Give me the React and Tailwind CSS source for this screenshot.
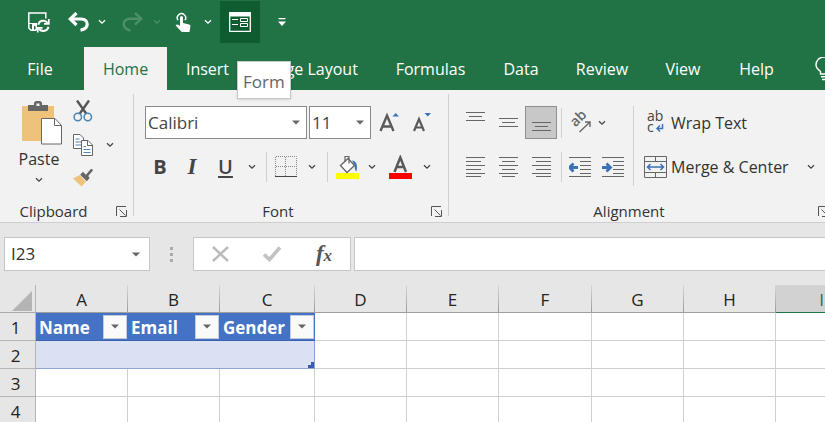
import React from "react";

const Chevron = ({ className = "text-[#444]" }) => (
  <svg width="8" height="6" viewBox="0 0 8 6" className={"shrink-0 " + className} fill="none" stroke="currentColor" strokeWidth="1.3">
    <path d="M1 1.2 4 4.2 7 1.2" />
  </svg>
);

const DownTriangle = ({ className = "text-[#666]" }) => (
  <svg width="8" height="5" viewBox="0 0 8 5" className={"shrink-0 " + className}>
    <path d="M0 .5h8L4 4.5z" fill="currentColor" />
  </svg>
);

const SaveIcon = () => (
  <svg width="22" height="21" viewBox="0 0 22 21" fill="none" stroke="#fff">
    <path d="M8 18.2H3L.8 16V1h17v5.500" strokeWidth="1.5" />
    <path d="M1 11.500h8" />
    <path d="M4 12h5v6.500H7.500V14H6v4.500H4z" fill="#fff" stroke="none" />
    <path d="M10.200 12.800a5.300 5.300 0 0 1 9.400-2M20.500 14.800a5.300 5.300 0 0 1-9.400 2" strokeWidth="2" />
    <path d="M20.800 7v4.800H16M9.800 20.600v-4.800h4.800" strokeWidth="1.700" />
  </svg>
);

const UndoIcon = () => (
  <svg width="21" height="20" viewBox="0 0 21 20" fill="none" stroke="currentColor" strokeWidth="3.2">
    <path d="M8.500 1 2.300 7l6.200 6" />
    <path d="M3 7h10c4 0 6.200 2.200 6.200 5.200 0 3-2.500 5-6.700 6" />
  </svg>
);

const RedoIcon = () => (
  <svg width="21" height="20" viewBox="0 0 21 20" fill="none" stroke="currentColor" strokeWidth="2.4">
    <path d="m13 1 6.2 5.8-6.2 5.8" />
    <path d="M18.5 6.8H8c-4 0-6.3 2.2-6.3 5.2 0 3.2 2.5 5.5 6.8 6.6" />
  </svg>
);

const TouchIcon = () => (
  <svg width="16" height="21" viewBox="0 0 16 21">
    <path d="M3 8.2a4.2 4.2 0 1 1 7 0" fill="none" stroke="#fff" strokeWidth="1.5" />
    <path d="M5 5.5a1.5 1.5 0 0 1 3 0V11l6 1.6c1.2.4 1.6 1.1 1.4 2.2L14.5 20H6.8L.6 13.4c.8-1.2 2-1.2 3-.4L5 14z" fill="#fff" />
  </svg>
);

const FormIcon = () => (
  <svg width="22" height="20" viewBox="0 0 22 20" fill="none" stroke="#fff">
    <path d="M.7.7h20.6v18.6H.7z" strokeWidth="1.3" />
    <path d="M1 1h20v3.5H1z" fill="#fff" stroke="none" />
    <path d="M3 7.5h6M3 12.5h6M11.500 6.5h7v3h-7zM11.500 11.5h7v3h-7z" />
  </svg>
);

const BulbIcon = () => (
  <svg width="18" height="24" viewBox="0 0 18 24" fill="none" stroke="#fff" strokeWidth="1.4">
    <path d="M5.5 17v-2.5C3 12.6 1 10.800 1 8a8 8 0 0 1 16 0c0 2.800-2 4.600-4.500 6.500V17zM6 19.800h6M7 22.500h4" />
  </svg>
);

const PasteIcon = () => (
  <svg width="41" height="44" viewBox="0 0 41 44">
    <path d="M0 5h32v35H0z" fill="#eec27a" />
    <path d="M6 4h6V2.500C12 1 13 0 14.500 0h3C19 0 20 1 20 2.500V4h6v6H6z" fill="#666" />
    <path d="M14.500 2.500h3V5h-3z" fill="#f2f2f2" />
    <path d="M19.500 17.500H33l6.500 7V43h-20z" fill="#fff" stroke="#666" />
    <path d="M32.500 17.500v7h7" fill="none" stroke="#666" />
  </svg>
);

const CutIcon = () => (
  <svg width="20" height="22" viewBox="0 0 20 22" fill="none">
    <path d="M4 .5 13.500 14M16 .5 6.500 14" stroke="#555" strokeWidth="2.400" />
    <circle cx="4.800" cy="17" r="3.700" stroke="#4a86b8" strokeWidth="1.500" />
    <circle cx="14.800" cy="17" r="3.700" stroke="#4a86b8" strokeWidth="1.500" />
  </svg>
);

const CopyIcon = () => (
  <svg width="20" height="22" viewBox="0 0 20 22" fill="#fff" stroke="#666">
    <path d="M.5.5H7L10.500 4v10.500H.5z" />
    <path d="M2.500 5h4M2.500 8h6M2.500 11h6" stroke="#4a86b8" />
    <path d="M8.500 6.500H15L19.500 11v10.500h-11z" />
    <path d="M14.500 6.500v5h5" fill="none" />
    <path d="M10.500 12.500h2.500M10.500 15.500h7M10.500 18.500h7" stroke="#4a86b8" />
  </svg>
);

const BrushIcon = () => (
  <svg width="21" height="19" viewBox="0 0 21 19">
    <path d="M0 10.500 7 7l6.500 7L9 19z" fill="#eec27a" />
    <path d="m7.500 6.500 3-3 3 3L18.500.8c1.500-.8 2.800.5 2 2L16 8l1.500 2-3 3.500z" fill="#666" />
  </svg>
);

const Launcher = () => (
  <svg width="11" height="11" viewBox="0 0 11 11" fill="none" stroke="#555">
    <path d="M.5 10V.5H10M3.500 3.500l6 6M10.500 4v6.500H4" />
  </svg>
);

const BordersIcon = () => (
  <svg width="22" height="22" viewBox="0 0 22 22" fill="none" stroke="#888">
    <path d="M.5 20V.5h21V20M10.500 1v19M1 10.500h20" strokeDasharray="1 1" />
    <path d="M0 20.500h22" stroke="#444" />
  </svg>
);

const FillIcon = () => (
  <svg width="23" height="24" viewBox="0 0 23 24" fill="none">
    <path d="M0 18h23v6H0z" fill="#ff0" />
    <path d="M4.500 10.500 12 3.500l6.500 7L11 17.500z" fill="#fff" stroke="#666" strokeWidth="1.300" />
    <path d="M9 7V1.500h4V8.500" stroke="#666" strokeWidth="1.200" />
    <path d="M16 5.500c4 .5 6 4 4.500 11-1.500-1-2-3-1.700-6z" fill="#3a72b5" />
  </svg>
);

const FontColorIcon = () => (
  <svg width="23" height="24" viewBox="0 0 23 24" fill="none">
    <path d="M0 18h23v6H0z" fill="#f00" />
    <path d="M5.500 17 11.300 2.500 17 17M7.500 12h7.500" stroke="#5a5a5a" strokeWidth="2.500" />
  </svg>
);

const GrowIcon = ({ down }) => (
  <svg width="22" height="22" viewBox="0 0 22 22" fill="none">
    {down ? (
      <>
        <path d="M3 19 8 7 13 19M5 15.500h6" stroke="#5a5a5a" strokeWidth="2.200" />
        <path d="M13.500 1h6.500l-3.200 3.500z" fill="#3a72b5" />
      </>
    ) : (
      <>
        <path d="M1.500 19 8 3.500 14.500 19M4 14.500h8" stroke="#5a5a5a" strokeWidth="2.400" />
        <path d="M13.500 4.500h6.500L16.700 1z" fill="#3a72b5" />
      </>
    )}
  </svg>
);

const LINES = {
  top: "M0 .5h19M3 4.500h13M0 8.500h19",
  left: "M0 .5h19M0 4.500h15M0 8.500h19M0 12.500h15M0 16.500h19M0 19.500h15",
  center: "M0 .5h19M3 4.500h13M0 8.500h19M3 12.500h13M0 16.500h19M3 19.500h13",
  right: "M0 .5h19M4 4.500h15M0 8.500h19M4 12.500h15M0 16.500h19M4 19.500h15",
};

const LinesIcon = ({ kind }) => (
  <svg width="19" height={kind === "top" ? 9 : 20} fill="none" stroke="#666">
    <path d={LINES[kind]} />
  </svg>
);

const IndentIcon = ({ right }) => (
  <svg width="22" height="20" viewBox="0 0 22 20" fill="none" stroke="#666">
    <path d="M0 .5h22M11 4.500h11M11 8.500h11M11 12.500h11M11 16.500h11M0 19.500h22" />
    <path d={right ? "M0 10.500h8M4.500 6.500l4 4-4 4" : "M9 10.500H1M4.500 6.500l-4 4 4 4"} stroke="#3a72b5" strokeWidth="2.800" />
  </svg>
);

const OrientationIcon = () => (
  <svg width="20" height="20" viewBox="0 0 20 20" fill="none" stroke="#666" strokeWidth="1.400" className="overflow-visible">
    <text transform="translate(4.500 14.500) rotate(-45)" fontSize="14" fontWeight="600" fill="#666" stroke="none">ab</text>
    <path d="M8.500 19 18.500 9.500M14 9h5v5" />
  </svg>
);

const WrapIcon = () => (
  <svg width="17" height="22" viewBox="0 0 17 22" fill="none" className="overflow-visible">
    <text fontSize="14" fill="#444">
      <tspan x="0" y="9">ab</tspan>
      <tspan x="0" y="20">c</tspan>
    </text>
    <path d="M15.500 12v4.500H10M13 13.500l-3 3 3 3" stroke="#3a72b5" strokeWidth="1.500" />
  </svg>
);

const MergeIcon = () => (
  <svg width="23" height="22" viewBox="0 0 23 22" fill="none" stroke="#666">
    <path d="M.5.500h22v21H.5zM.5 5.500h22M.5 16.500h22M11.500.500v5M11.500 16.500v5" />
    <path d="M3.500 11h16M6.500 8l-3 3 3 3M16.500 8l3 3-3 3" stroke="#3a72b5" strokeWidth="1.500" />
  </svg>
);

const IconButton = ({ label, className = "", children }) => (
  <button type="button" aria-label={label} className={"flex shrink-0 items-center justify-center " + className}>
    {children}
  </button>
);

const Rule = () => <div className="h-[30px] w-px shrink-0 bg-[#cfcfcf]" />;

const Group = ({ title, className, children }) => (
  <section aria-label={title} className={"flex shrink-0 flex-col " + className}>
    <div className="h-[110px]">{children}</div>
    <div className="flex h-[22px] items-center">
      <span className="flex-1 text-center text-[15px] leading-5">{title}</span>
      <IconButton label={title + " settings"} className="w-[26px] pl-0.5">
        <Launcher />
      </IconButton>
    </div>
  </section>
);

const GroupRule = () => <div className="mt-1 h-[122px] w-px shrink-0 bg-[#cfcfcf]" />;

const TABS = [
  ["File", "w-[84px] pr-1"],
  ["Home", "w-[83px] bg-[#f2f2f2] text-[#217346]"],
  ["Insert", "w-[81px]"],
  ["Page Layout", "w-[129px]"],
  ["Formulas", "w-[107px]"],
  ["Data", "w-[74px]"],
  ["Review", "w-[88px]"],
  ["View", "w-[74px]"],
  ["Help", "w-[73px]"],
];

function TitleBar() {
  return (
    <header className="bg-[#217346] text-white">
      <div className="flex h-[47px] items-start pl-7">
        <div className="flex h-11 items-center">
          <IconButton label="Save"><SaveIcon /></IconButton>
          <IconButton label="Undo" className="ml-[18px]"><UndoIcon /></IconButton>
          <IconButton label="Undo history" className="ml-[9px]"><Chevron className="text-white" /></IconButton>
          <IconButton label="Redo" className="ml-4 text-[#4c9069]"><RedoIcon /></IconButton>
          <IconButton label="Redo history" className="ml-[10px]"><Chevron className="text-[#4c9069]" /></IconButton>
          <IconButton label="Touch mode" className="ml-[14px]"><TouchIcon /></IconButton>
          <IconButton label="Touch mode options" className="ml-[13px]"><Chevron className="text-white" /></IconButton>
          <div className="relative ml-2">
            <IconButton label="Form" className="h-[42px] w-10 bg-[#0e5c2f]"><FormIcon /></IconButton>
            <div role="tooltip" className="absolute left-[17px] top-[60px] z-10 border border-[#c8c8c8] bg-white px-[5px] pb-1 pt-2 text-[17px] leading-6 text-[#666] shadow">
              Form
            </div>
          </div>
          <IconButton label="Customize toolbar" className="ml-[17px]">
            <svg width="10" height="9" viewBox="0 0 10 9" fill="#fff"><path d="M1.500 0h7v1.300h-7zM1 3.500h8L5 8z" /></svg>
          </IconButton>
        </div>
      </div>
      <nav className="flex h-[43px] overflow-hidden">
        {TABS.map(([name, style]) => (
          <button key={name} type="button" className={"shrink-0 whitespace-nowrap text-[16px] " + style}>
            {name}
          </button>
        ))}
        <IconButton label="Tell me" className="ml-[22px]"><BulbIcon /></IconButton>
      </nav>
    </header>
  );
}

const Dropdown = ({ label, value, className }) => (
  <div className={"relative flex h-[33px] items-center border border-[#8a8a8a] bg-white " + className}>
    <select aria-label={label} defaultValue={value} className="h-full w-full appearance-none bg-transparent pl-0.5 text-[17px] text-[#444]">
      <option>{value}</option>
    </select>
    <span className="pointer-events-none absolute right-1.5"><DownTriangle /></span>
  </div>
);

function Ribbon() {
  return (
    <div className="flex h-[133px] overflow-hidden border-b border-[#cfcfcf] bg-[#f2f2f2] text-[#333]">
      <Group title="Clipboard" className="w-[133px]">
        <div className="flex">
          <button type="button" className="ml-4 mt-[11px] flex w-[46px] flex-col items-center">
            <span className="pl-1.5"><PasteIcon /></span>
            <span className="text-[16px] leading-7">Paste</span>
            <span className="mt-1"><Chevron /></span>
          </button>
          <div className="ml-[11px] mt-2.5 flex flex-col gap-3">
            <IconButton label="Cut" className="w-5"><CutIcon /></IconButton>
            <div className="flex items-center gap-[13px]">
              <IconButton label="Copy" className="w-5"><CopyIcon /></IconButton>
              <IconButton label="Copy options"><Chevron /></IconButton>
            </div>
            <IconButton label="Format painter" className="w-5"><BrushIcon /></IconButton>
          </div>
        </div>
      </Group>
      <GroupRule />
      <Group title="Font" className="w-[314px]">
        <div className="flex items-center pl-[11px] pt-4">
          <Dropdown label="Font" value="Calibri" className="w-[162px]" />
          <Dropdown label="Font size" value="11" className="ml-0.5 w-[62px]" />
          <IconButton label="Increase font size" className="ml-2"><GrowIcon /></IconButton>
          <IconButton label="Decrease font size" className="ml-2.5"><GrowIcon down /></IconButton>
        </div>
        <div className="mt-[11px] flex h-[34px] items-center pl-[11px] text-[20px] text-[#444]">
          <IconButton label="Bold" className="w-[30px] font-bold">B</IconButton>
          <IconButton label="Italic" className="w-[34px] font-['Liberation_Serif'] text-[23px] font-bold italic">I</IconButton>
          <IconButton label="Underline" className="w-[33px] font-semibold underline underline-offset-2">U</IconButton>
          <IconButton label="Underline options" className="w-6 pr-1"><Chevron /></IconButton>
          <Rule />
          <IconButton label="Borders" className="ml-2"><BordersIcon /></IconButton>
          <IconButton label="Border options" className="w-[30px]"><Chevron /></IconButton>
          <Rule />
          <IconButton label="Fill color" className="ml-2"><FillIcon /></IconButton>
          <IconButton label="Fill options" className="w-[30px] pr-1"><Chevron /></IconButton>
          <IconButton label="Font color"><FontColorIcon /></IconButton>
          <IconButton label="Font color options" className="w-[29px]"><Chevron /></IconButton>
        </div>
      </Group>
      <GroupRule />
      <Group title="Alignment" className="w-[386px]">
        <div className="flex pt-4">
          <div className="flex flex-col gap-[11px] pl-2.5">
            <div className="flex h-[33px] items-center">
              <IconButton label="Top align" className="w-[33px] pb-3"><LinesIcon kind="top" /></IconButton>
              <IconButton label="Middle align" className="w-[33px]"><LinesIcon kind="top" /></IconButton>
              <IconButton label="Bottom align" className="h-[33px] w-8 border border-[#8f8f8f] bg-[#c8c8c8] pt-2"><LinesIcon kind="top" /></IconButton>
              <div className="ml-1"><Rule /></div>
              <IconButton label="Orientation" className="ml-[9px]"><OrientationIcon /></IconButton>
              <IconButton label="Orientation options" className="ml-[7px]"><Chevron /></IconButton>
            </div>
            <div className="flex h-[34px] items-center">
              <IconButton label="Align left" className="w-[33px]"><LinesIcon kind="left" /></IconButton>
              <IconButton label="Center" className="w-[33px]"><LinesIcon kind="center" /></IconButton>
              <IconButton label="Align right" className="w-8"><LinesIcon kind="right" /></IconButton>
              <div className="ml-1"><Rule /></div>
              <IconButton label="Decrease indent" className="ml-[7px]"><IndentIcon /></IconButton>
              <IconButton label="Increase indent" className="ml-[11px]"><IndentIcon right /></IconButton>
            </div>
          </div>
          <div className="ml-[9px] h-20 w-px bg-[#cfcfcf]" />
          <div className="flex flex-col gap-[11px] pl-2.5 text-[16px]">
            <button type="button" className="flex h-[33px] items-center">
              <span className="flex w-[27px] justify-center pr-1"><WrapIcon /></span>
              <span>Wrap Text</span>
            </button>
            <div className="flex h-[34px] items-center">
              <button type="button" className="flex items-center whitespace-nowrap">
                <span className="w-[27px]"><MergeIcon /></span>
                <span>Merge &amp; Center</span>
              </button>
              <IconButton label="Merge options" className="ml-[18px]"><Chevron /></IconButton>
            </div>
          </div>
        </div>
      </Group>
      <GroupRule />
    </div>
  );
}

function FormulaBar() {
  return (
    <div className="flex h-[62px] items-start bg-[#e6e6e6] pl-1 pt-3.5">
      <div className="flex h-[34px] w-[146px] shrink-0 items-center border border-[#c6c6c6] bg-white pr-[9px]">
        <input aria-label="Name box" defaultValue="I23" className="w-full min-w-0 bg-transparent pl-1.5 text-[17px] text-[#333]" />
        <IconButton label="Cell names"><DownTriangle /></IconButton>
      </div>
      <div className="flex h-[34px] w-[43px] shrink-0 items-center justify-center">
        <svg width="3" height="15" fill="#aaa"><path d="M0 0h3v3H0zM0 6h3v3H0zM0 12h3v3H0z" /></svg>
      </div>
      <div className="flex h-[34px] w-[158px] shrink-0 items-center border border-[#c6c6c6] bg-white">
        <IconButton label="Cancel" className="w-[52px]">
          <svg width="17" height="16" fill="none" stroke="#bbb" strokeWidth="2.400"><path d="m1 1 15 14M16 1 1 15" /></svg>
        </IconButton>
        <IconButton label="Enter" className="w-[52px]">
          <svg width="18" height="16" fill="none" stroke="#c2c2c2" strokeWidth="3.600"><path d="m1 8.500 5.500 5L17 1.500" /></svg>
        </IconButton>
        <IconButton label="Insert function" className="w-[52px] font-['Liberation_Serif'] italic text-[#555]">
          <span className="text-[23px] font-bold leading-6">f</span>
          <span className="pt-1 text-[17px] font-bold leading-5">x</span>
        </IconButton>
      </div>
      <input aria-label="Formula" className="ml-[3px] h-[34px] min-w-0 flex-1 border border-r-0 border-[#c6c6c6] bg-white px-2 text-[17px]" />
    </div>
  );
}

const COLS = [
  ["A", "w-[92px]"], ["B", "w-[92px]"], ["C", "w-[95px]"], ["D", "w-[92px]"], ["E", "w-[92px]"], ["F", "w-[93px]"],
  ["G", "w-[92px]"], ["H", "w-[92px]"], ["I", "w-[92px]"], ["J", "w-[92px]"], ["K", "w-[92px]"],
];
const FIELDS = ["Name", "Email", "Gender"];
const ROWS = [1, 2, 3, 4];

function cellStyle(row, col) {
  if (row === 1 && col < 3) return "border-b border-[#3a62ae] bg-[#4472c4]";
  if (row === 2 && col < 3) return "border-b border-[#8ea5d6] bg-[#d9e1f2]" + (col === 2 ? " border-r" : "");
  return "border-b border-r border-[#d0d0d0] bg-white";
}

function Sheet() {
  return (
    <div className="overflow-hidden bg-white">
      <table className="w-px table-fixed border-separate border-spacing-0">
        <colgroup>
          <col className="w-9" />
          {COLS.map(([name, width]) => <col key={name} className={width} />)}
        </colgroup>
        <thead>
          <tr className="h-7 text-[17px] leading-6 text-[#222]">
            <th className="border-b border-r border-[#ababab] border-r-[#b5b5b5] bg-[#e6e6e6] p-0">
              <svg width="20" height="20" className="ml-3 mt-1 block"><path d="M20 0v20H0z" fill="#b4b4b4" /></svg>
            </th>
            {COLS.map(([name]) => (
              <th
                key={name}
                scope="col"
                className={
                  "border-b bg-[linear-gradient(to_bottom,#d8d8d8,#9a9a9a)] bg-[length:1px_100%] bg-right bg-no-repeat p-0 pr-px pt-[3px] font-normal " +
                  (name === "I" ? "border-[#217346] bg-[#d2d2d2] text-[#217346]" : "border-[#9f9f9f] bg-[#e6e6e6]")
                }
              >
                {name}
              </th>
            ))}
          </tr>
        </thead>
        <tbody>
          {ROWS.map((row) => (
            <tr key={row} className="h-7">
              <th scope="row" className="border-b border-r border-[#b5b5b5] bg-[#e6e6e6] p-0 pr-1 pt-0.5 text-[17px] font-normal leading-6 text-[#222]">{row}</th>
              {COLS.map(([name], col) => (
                <td key={name} className={"p-0 " + cellStyle(row, col)}>
                  {row === 1 && col < 3 && (
                    <div className="flex items-center justify-between pl-[3px] pr-px text-[17px] font-bold leading-6 text-white">
                      <span className="pt-0.5">{FIELDS[col]}</span>
                      <IconButton label={"Filter " + FIELDS[col]} className="h-6 w-6 border border-[#c3cbdc] bg-[#fafafa]">
                        <DownTriangle />
                      </IconButton>
                    </div>
                  )}
                  {row === 2 && col === 2 && (
                    <svg width="6" height="6" className="ml-auto mt-5 block"><path d="M3 0h3v6H0V3h3z" fill="#3a5bb0" /></svg>
                  )}
                </td>
              ))}
            </tr>
          ))}
        </tbody>
      </table>
    </div>
  );
}

export default function App() {
  return (
    <div className="w-full overflow-hidden font-['Open_Sans','Noto_Sans',sans-serif]">
      <TitleBar />
      <Ribbon />
      <FormulaBar />
      <Sheet />
    </div>
  );
}
